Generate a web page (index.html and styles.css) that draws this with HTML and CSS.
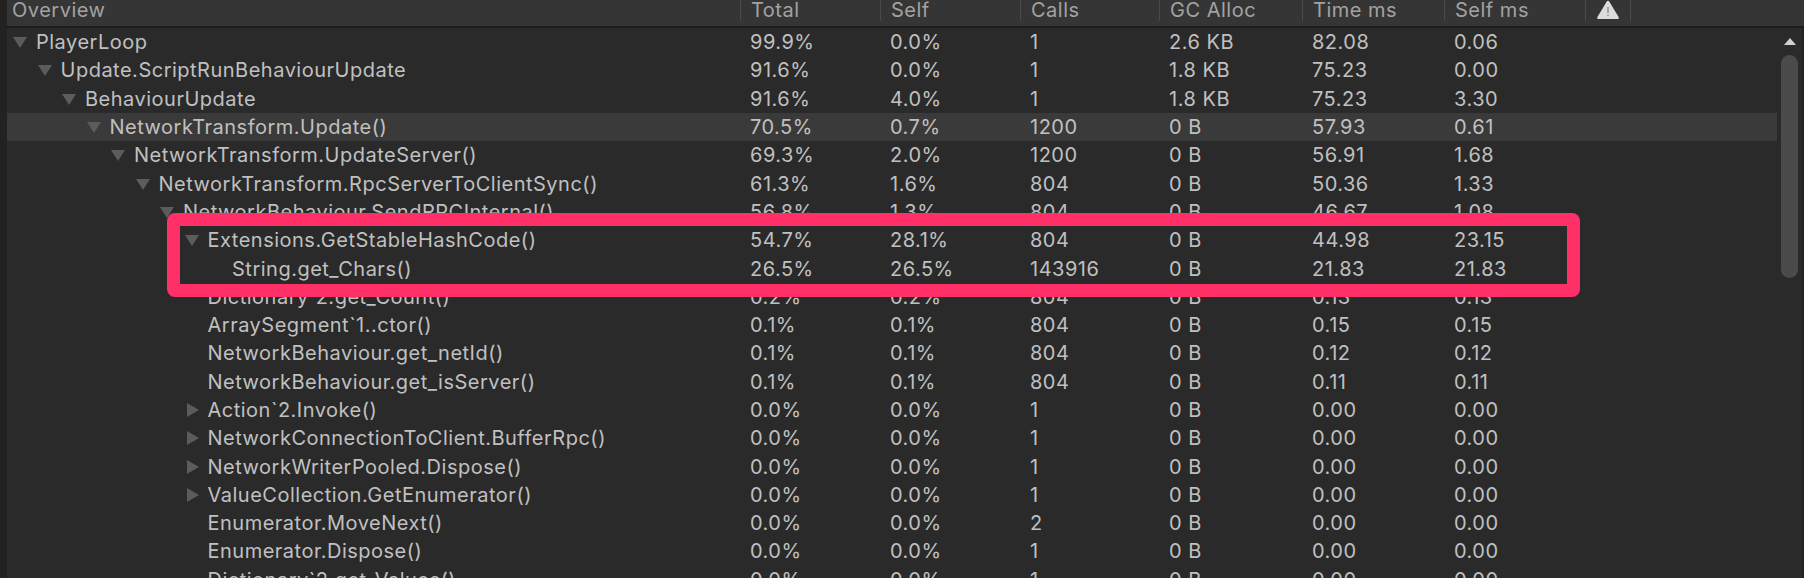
FILE: index.html
```html
<!DOCTYPE html>
<html>
<head>
<meta charset="utf-8">
<link rel="stylesheet" href="styles.css">
</head>
<body>
<div class="window">
  <div class="edge"></div>
  <div class="main">
    <div class="header">
      <div class="hcell first">Overview</div>
      <div class="hcell">Total</div>
      <div class="hcell">Self</div>
      <div class="hcell">Calls</div>
      <div class="hcell">GC Alloc</div>
      <div class="hcell">Time ms</div>
      <div class="hcell">Self ms</div>
      <div class="hcell warn">
        <svg width="24" height="20" viewBox="0 0 24 20"><path d="M10.3 2.2 Q12 -0.6 13.7 2.2 L22.6 17 Q23.6 19 21.4 19 L2.6 19 Q0.4 19 1.4 17 Z" fill="#dcdcdc"/><rect x="11.2" y="7" width="1.6" height="6" fill="#9a9a9a"/><rect x="11.2" y="14.6" width="1.6" height="1.6" fill="#9a9a9a"/></svg>
      </div>
      <div class="hcell rest"></div>
    </div>
    <div class="body">
      <div class="rows">
        <div class="row"><div class="name l0"><span class="arr down"></span>PlayerLoop</div><div class="c">99.9%</div><div class="c">0.0%</div><div class="c">1</div><div class="c">2.6 KB</div><div class="c">82.08</div><div class="c">0.06</div><div></div></div>
        <div class="row"><div class="name l1"><span class="arr down"></span>Update.ScriptRunBehaviourUpdate</div><div class="c">91.6%</div><div class="c">0.0%</div><div class="c">1</div><div class="c">1.8 KB</div><div class="c">75.23</div><div class="c">0.00</div><div></div></div>
        <div class="row"><div class="name l2"><span class="arr down"></span>BehaviourUpdate</div><div class="c">91.6%</div><div class="c">4.0%</div><div class="c">1</div><div class="c">1.8 KB</div><div class="c">75.23</div><div class="c">3.30</div><div></div></div>
        <div class="row sel"><div class="name l3"><span class="arr down"></span>NetworkTransform.Update()</div><div class="c">70.5%</div><div class="c">0.7%</div><div class="c">1200</div><div class="c">0 B</div><div class="c">57.93</div><div class="c">0.61</div><div></div></div>
        <div class="row"><div class="name l4"><span class="arr down"></span>NetworkTransform.UpdateServer()</div><div class="c">69.3%</div><div class="c">2.0%</div><div class="c">1200</div><div class="c">0 B</div><div class="c">56.91</div><div class="c">1.68</div><div></div></div>
        <div class="row"><div class="name l5"><span class="arr down"></span>NetworkTransform.RpcServerToClientSync()</div><div class="c">61.3%</div><div class="c">1.6%</div><div class="c">804</div><div class="c">0 B</div><div class="c">50.36</div><div class="c">1.33</div><div></div></div>
        <div class="row"><div class="name l6"><span class="arr down"></span>NetworkBehaviour.SendRPCInternal()</div><div class="c">56.8%</div><div class="c">1.3%</div><div class="c">804</div><div class="c">0 B</div><div class="c">46.67</div><div class="c">1.08</div><div></div></div>
        <div class="row"><div class="name l7"><span class="arr down"></span>Extensions.GetStableHashCode()</div><div class="c">54.7%</div><div class="c">28.1%</div><div class="c">804</div><div class="c">0 B</div><div class="c">44.98</div><div class="c">23.15</div><div></div></div>
        <div class="row"><div class="name l8"><span class="arr"></span>String.get_Chars()</div><div class="c">26.5%</div><div class="c">26.5%</div><div class="c">143916</div><div class="c">0 B</div><div class="c">21.83</div><div class="c">21.83</div><div></div></div>
        <div class="row"><div class="name l7"><span class="arr"></span>Dictionary`2.get_Count()</div><div class="c">0.2%</div><div class="c">0.2%</div><div class="c">804</div><div class="c">0 B</div><div class="c">0.13</div><div class="c">0.13</div><div></div></div>
        <div class="row"><div class="name l7"><span class="arr"></span>ArraySegment`1..ctor()</div><div class="c">0.1%</div><div class="c">0.1%</div><div class="c">804</div><div class="c">0 B</div><div class="c">0.15</div><div class="c">0.15</div><div></div></div>
        <div class="row"><div class="name l7"><span class="arr"></span>NetworkBehaviour.get_netId()</div><div class="c">0.1%</div><div class="c">0.1%</div><div class="c">804</div><div class="c">0 B</div><div class="c">0.12</div><div class="c">0.12</div><div></div></div>
        <div class="row"><div class="name l7"><span class="arr"></span>NetworkBehaviour.get_isServer()</div><div class="c">0.1%</div><div class="c">0.1%</div><div class="c">804</div><div class="c">0 B</div><div class="c">0.11</div><div class="c">0.11</div><div></div></div>
        <div class="row"><div class="name l7"><span class="arr right"></span>Action`2.Invoke()</div><div class="c">0.0%</div><div class="c">0.0%</div><div class="c">1</div><div class="c">0 B</div><div class="c">0.00</div><div class="c">0.00</div><div></div></div>
        <div class="row"><div class="name l7"><span class="arr right"></span>NetworkConnectionToClient.BufferRpc()</div><div class="c">0.0%</div><div class="c">0.0%</div><div class="c">1</div><div class="c">0 B</div><div class="c">0.00</div><div class="c">0.00</div><div></div></div>
        <div class="row"><div class="name l7"><span class="arr right"></span>NetworkWriterPooled.Dispose()</div><div class="c">0.0%</div><div class="c">0.0%</div><div class="c">1</div><div class="c">0 B</div><div class="c">0.00</div><div class="c">0.00</div><div></div></div>
        <div class="row"><div class="name l7"><span class="arr right"></span>ValueCollection.GetEnumerator()</div><div class="c">0.0%</div><div class="c">0.0%</div><div class="c">1</div><div class="c">0 B</div><div class="c">0.00</div><div class="c">0.00</div><div></div></div>
        <div class="row"><div class="name l7"><span class="arr"></span>Enumerator.MoveNext()</div><div class="c">0.0%</div><div class="c">0.0%</div><div class="c">2</div><div class="c">0 B</div><div class="c">0.00</div><div class="c">0.00</div><div></div></div>
        <div class="row"><div class="name l7"><span class="arr"></span>Enumerator.Dispose()</div><div class="c">0.0%</div><div class="c">0.0%</div><div class="c">1</div><div class="c">0 B</div><div class="c">0.00</div><div class="c">0.00</div><div></div></div>
        <div class="row"><div class="name l7"><span class="arr"></span>Dictionary`2.get_Values()</div><div class="c">0.0%</div><div class="c">0.0%</div><div class="c">1</div><div class="c">0 B</div><div class="c">0.00</div><div class="c">0.00</div><div></div></div>
      </div>
      <div class="scrollbar">
        <div class="sb-arrow"></div>
        <div class="sb-thumb"></div>
      </div>
      <div class="callout"></div>
    </div>
  </div>
</div>
</body>
</html>
```

FILE: styles.css
```css
html, body {
  margin: 0;
  padding: 0;
  background: #2a2a2a;
}
body {
  width: 1804px;
  height: 578px;
  overflow: hidden;
  font-family: "Inter", "Noto Sans", sans-serif;
  font-size: 20px;
  letter-spacing: 0.5px;
  color: #c0c0c0;
}
.window {
  display: flex;
  width: 1804px;
  height: 578px;
}
.edge {
  width: 7px;
  flex: none;
  background: #222222;
}
.main {
  flex: 1;
  display: flex;
  flex-direction: column;
  min-width: 0;
}
.header {
  height: 26px;
  flex: none;
  background: #353535;
  border-bottom: 2px solid #1c1c1c;
  display: grid;
  grid-template-columns: 733px 140px 140px 139px 143px 142px 141px 45px 1fr;
  align-items: start;
}
.hcell {
  height: 21px;
  line-height: 21px;
  padding-left: 10px;
  border-left: 1px solid #4a4a4a;
  color: #a2a2a2;
  white-space: nowrap;
}
.hcell.first {
  border-left: none;
  padding-left: 5px;
}
.hcell.warn {
  padding-left: 0;
  display: flex;
  justify-content: center;
  align-items: flex-start;
}
.hcell.rest {
  padding-left: 0;
}
.body {
  flex: 1;
  position: relative;
  display: flex;
  overflow: hidden;
}
.rows {
  flex: 1;
  display: grid;
  grid-auto-rows: 28.3px;
  align-content: start;
}
.row {
  display: grid;
  grid-template-columns: 733px 140px 140px 139px 143px 142px 141px 1fr;
  align-items: center;
  white-space: nowrap;
}
.row.sel {
  background: #3a3a3a;
}
.c {
  padding-left: 10px;
}
.name {
  display: flex;
  align-items: center;
}
.l0 { padding-left: 6px; }
.l1 { padding-left: 30.5px; }
.l2 { padding-left: 55px; }
.l3 { padding-left: 79.5px; }
.l4 { padding-left: 104px; }
.l5 { padding-left: 128.5px; }
.l6 { padding-left: 153px; }
.l7 { padding-left: 177.5px; }
.l8 { padding-left: 202px; }
.arr {
  width: 14px;
  height: 14px;
  margin-right: 9px;
  flex: none;
}
.arr.down::before {
  content: "";
  display: block;
  margin: 2px 0 0 0;
  border-left: 7px solid transparent;
  border-right: 7px solid transparent;
  border-top: 11px solid #5c5c5c;
}
.arr.right::before {
  content: "";
  display: block;
  margin: 0 0 0 2px;
  border-top: 7px solid transparent;
  border-bottom: 7px solid transparent;
  border-left: 12px solid #5c5c5c;
}
.scrollbar {
  width: 27px;
  flex: none;
  display: flex;
  flex-direction: column;
  align-items: center;
  border-right: 2px solid #222222;
  box-sizing: border-box;
}
.sb-arrow {
  margin-top: 10px;
  border-left: 6px solid transparent;
  border-right: 6px solid transparent;
  border-bottom: 7px solid #d0d0d0;
}
.sb-thumb {
  margin-top: 10px;
  width: 17px;
  height: 223px;
  border-radius: 9px;
  background: #4b4b4b;
}
.callout {
  position: absolute;
  left: 160px;
  top: 185px;
  width: 1413px;
  height: 84px;
  box-sizing: border-box;
  border: 13px solid #ff2f68;
  border-radius: 8px;
}
```
